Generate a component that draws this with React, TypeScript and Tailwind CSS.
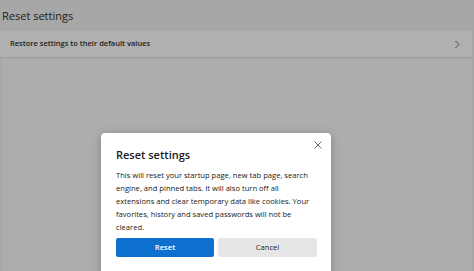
import React from 'react';

const Chevron = () => (
    <svg width="6" height="9" viewBox="0 0 6 9" fill="none">
        <path d="M1.5 1L5 4.5L1.5 8" stroke="#4a4a4a" strokeWidth="1" />
    </svg>
);

const CloseIcon = () => (
    <svg width="8" height="8" viewBox="0 0 8 8" fill="none">
        <path d="M0.5 0.5L7.5 7.5M7.5 0.5L0.5 7.5" stroke="#5a5a5a" strokeWidth="0.9" />
    </svg>
);

const ResetDialog: React.FC = () => {
    return (
        <div className="absolute left-[101px] top-[133px] w-[230px] h-[150px] bg-white rounded-[4px] shadow-[0_2px_10px_rgba(0,0,0,0.25)] pl-[15px] pr-[14px] pt-[14px]">
            <button className="absolute right-[7px] top-[6px] w-[12px] h-[12px] flex items-center justify-center">
                <CloseIcon />
            </button>
            <h2 className="text-[11px] leading-[15px] font-semibold text-[#1b1b1b]">Reset settings</h2>
            <p className="mt-[7px] text-[7.6px] leading-[13px] text-[#202020]">
                This will reset your startup page, new tab page, search engine, and pinned tabs. It will also turn off all
                extensions and clear temporary data like cookies. Your favorites, history and saved passwords will not be
                cleared.
            </p>
            <div className="mt-[4px] flex gap-[4px]">
                <button className="w-[98px] h-[19px] rounded-[2px] bg-[#0f6fce] text-white text-[7.6px] font-semibold">
                    Reset
                </button>
                <button className="w-[99px] h-[19px] rounded-[2px] bg-[#e6e6e6] text-[#1b1b1b] text-[7.6px]">
                    Cancel
                </button>
            </div>
        </div>
    );
};

export default function App() {
    return (
        <div className="relative w-[474px] h-[271px] overflow-hidden bg-[#a7a7a7] font-['Open_Sans',sans-serif] flex flex-col">
            <h1 className="pl-[2px] pt-[8px] text-[11px] leading-[15px] text-[#1c1c1c]">Reset settings</h1>
            <div className="mt-[8px] mr-[2px] h-[27px] rounded-[3px] bg-[#b0b0b0] border-b border-[#9c9c9c] flex items-center justify-between pl-[10px] pr-[12px]">
                <span className="text-[7.5px] font-semibold text-[#1e1e1e]">Restore settings to their default values</span>
                <Chevron />
            </div>
            <div className="mt-[1px] mx-[2px] flex-1 bg-[#adadad]" />
            <ResetDialog />
        </div>
    );
}
